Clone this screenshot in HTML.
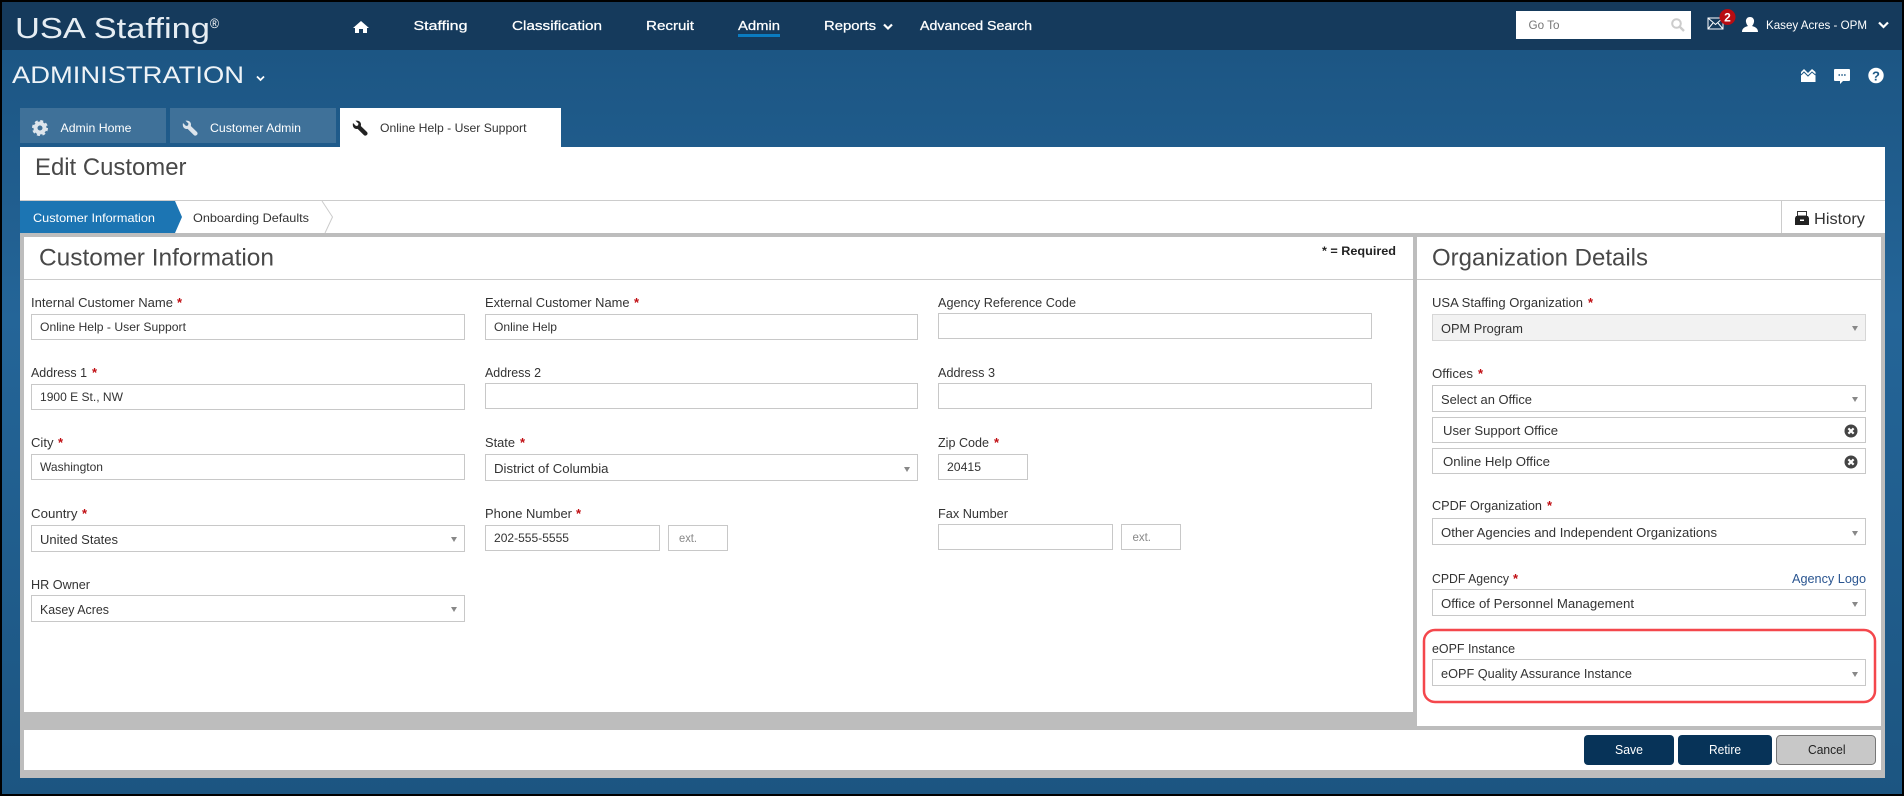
<!DOCTYPE html>
<html lang="en">
<head>
<meta charset="utf-8">
<title>Edit Customer - USA Staffing</title>
<style>
html,body{margin:0;padding:0;background:#000;width:1904px;height:796px;overflow:hidden}
svg{display:block}
text{font-family:"Liberation Sans",sans-serif;font-size:13px;fill:#333;white-space:pre}
.w{fill:#fff}
.nav{fill:#fff;font-size:13px;stroke:#fff;stroke-width:.25}
.tab{fill:#fff;font-size:12px}
.h{font-size:24px;fill:#484848}
.v{font-size:12px;fill:#333}
.s{font-size:13px;fill:#333}
.a{fill:#c00d12;font-weight:bold;font-size:13px}
.ph{font-size:12px;fill:#888}
.b{fill:#fff;stroke:#c8c8c8;stroke-width:1}
.arr{fill:#888}
</style>
</head>
<body>
<svg xmlns="http://www.w3.org/2000/svg" width="1904" height="796" viewBox="0 0 1904 796">
<defs>
<linearGradient id="bg" x1="0" y1="0" x2="0" y2="1">
<stop offset="0" stop-color="#1b5380"/><stop offset=".4" stop-color="#246598"/><stop offset="1" stop-color="#1c5581"/>
</linearGradient>
<path id="wrench" d="M1 3 L4 6 L6 5.5 L6.5 3.5 L3.5 .8 C6 0 9 1.5 9 4.5 C9 5 9 5.5 8.8 6 L15 12 C16 13.2 15.5 14.5 14.8 15 C14 15.8 12.7 16 11.8 15 L5.6 8.9 C2.8 9.7 0 7 1 3 Z"/>
<path id="dn" d="M0 0H6L3 5Z"/>
<g id="x"><circle r="6.5" fill="#444"/><path d="M-2.6-2.6L2.6 2.6M2.6-2.6L-2.6 2.6" stroke="#fff" stroke-width="2.2"/></g>
</defs>

<!-- frame -->
<rect width="1904" height="796" fill="#000"/>
<rect x="2" y="2" width="1900" height="792" fill="url(#bg)"/>
<rect x="2" y="2" width="1900" height="48" fill="#153a5c"/>

<!-- top bar -->
<text x="15" y="38" textLength="195" lengthAdjust="spacingAndGlyphs" style="font-size:29px;fill:#e6edf3">USA Staffing</text>
<text x="210" y="28" textLength="9" lengthAdjust="spacingAndGlyphs" class="w" style="font-size:14px">®</text>
<path d="M361 21L369 28H367V33H363V29H359V33H355V28H353Z" fill="#fff"/>
<text x="413.500" y="30" textLength="54" lengthAdjust="spacingAndGlyphs" class="nav">Staffing</text>
<text x="512" y="30" textLength="90" lengthAdjust="spacingAndGlyphs" class="nav">Classification</text>
<text x="646" y="30" textLength="48" lengthAdjust="spacingAndGlyphs" class="nav">Recruit</text>
<text x="738" y="30" textLength="42" lengthAdjust="spacingAndGlyphs" class="nav">Admin</text>
<rect x="738" y="34" width="42" height="3" fill="#0a7bc0"/>
<text x="824" y="30" textLength="52" lengthAdjust="spacingAndGlyphs" class="nav">Reports</text>
<path d="M884 24.500L888 28.500L892 24.500" fill="none" stroke="#fff" stroke-width="2.200"/>
<text x="920" y="30" textLength="112" lengthAdjust="spacingAndGlyphs" class="nav">Advanced Search</text>

<rect x="1516" y="11" width="175" height="28" fill="#fff"/>
<text x="1528.500" y="29" textLength="31" lengthAdjust="spacingAndGlyphs" style="font-size:12px;fill:#777">Go To</text>
<circle cx="1676.500" cy="23.500" r="4.300" fill="none" stroke="#ccc" stroke-width="2"/>
<path d="M1680 27L1684 31" stroke="#ccc" stroke-width="2.400"/>

<rect x="1708" y="18" width="15" height="11" fill="none" stroke="#fff" stroke-width="1"/>
<path d="M1708 18L1715.500 24.500L1723 18M1708 29L1713 23M1723 29L1718 23" fill="none" stroke="#fff" stroke-width="1"/>
<circle cx="1727.500" cy="17" r="8" fill="#b80d12"/>
<text x="1727.500" y="21.500" text-anchor="middle" class="w" style="font-size:12px;font-weight:bold">2</text>
<path d="M1750 17C1753 17 1754.500 19.500 1754 22C1753.700 24 1752.500 25.500 1752 26C1755 27 1758 28 1758 32H1742C1742 28 1745 27 1748 26C1747.500 25.500 1746.300 24 1746 22C1745.500 19.500 1747 17 1750 17Z" fill="#fff"/>
<text x="1766" y="29" textLength="101" lengthAdjust="spacingAndGlyphs" class="w" style="font-size:12px">Kasey Acres - OPM</text>
<path d="M1879 22.500L1883.500 27L1888 22.500" fill="none" stroke="#fff" stroke-width="2.200"/>

<!-- sub header -->
<text x="12" y="83" textLength="232" lengthAdjust="spacingAndGlyphs" style="font-size:24px;fill:#eef3f7">ADMINISTRATION</text>
<path d="M257 76.500L260.500 80L264 76.500" fill="none" stroke="#fff" stroke-width="1.800"/>
<path d="M1801 82V72L1804 69L1808 73L1812 69L1815.500 72V82Z" fill="#fff"/>
<path d="M1801 75L1804 72L1808 76L1812 72L1815.500 75" fill="none" stroke="#1d5885" stroke-width="1"/>
<path d="M1835 69H1849A1 1 0 0 1 1850 70V80A1 1 0 0 1 1849 81H1843L1840 84V81H1835A1 1 0 0 1 1834 80V70A1 1 0 0 1 1835 69Z" fill="#fff"/>
<path d="M1838.500 75h1.500M1841.300 75h1.500M1844.100 75h1.500" stroke="#1d5885" stroke-width="1.500"/>
<circle cx="1876" cy="75.500" r="7.700" fill="#fff"/>
<text x="1876" y="80.500" text-anchor="middle" style="font-size:13px;font-weight:bold;fill:#1d5885">?</text>

<!-- tabs -->
<rect x="20" y="108" width="146" height="35" fill="#3f7199"/>
<rect x="170" y="108" width="166" height="35" fill="#3f7199"/>
<rect x="340" y="108" width="221" height="39" fill="#fff"/>
<circle cx="40" cy="128" r="4.500" fill="none" stroke="#dde5ec" stroke-width="4"/>
<circle cx="40" cy="128" r="7" fill="none" stroke="#dde5ec" stroke-width="2" stroke-dasharray="3 2.500"/>
<text x="60.500" y="132" textLength="71" lengthAdjust="spacingAndGlyphs" class="tab">Admin Home</text>
<use href="#wrench" x="182" y="120" fill="#dde5ec"/>
<text x="210" y="132" textLength="91" lengthAdjust="spacingAndGlyphs" class="tab">Customer Admin</text>
<use href="#wrench" x="352" y="120" fill="#222"/>
<text x="380" y="132" textLength="146.500" lengthAdjust="spacingAndGlyphs" style="font-size:12px">Online Help - User Support</text>

<!-- page body -->
<rect x="20" y="147" width="1865" height="631" fill="#bdbdbd"/>
<rect x="20" y="147" width="1865" height="86" fill="#fff"/>
<text x="35" y="175" textLength="151.500" lengthAdjust="spacingAndGlyphs" class="h">Edit Customer</text>
<rect x="20" y="200" width="1865" height="1" fill="#ccc"/>

<path d="M20 201H175L182 217L175 233H20Z" fill="#1c75b3"/>
<text x="33" y="222" textLength="122" lengthAdjust="spacingAndGlyphs" class="tab">Customer Information</text>
<text x="193" y="222" textLength="116" lengthAdjust="spacingAndGlyphs" style="font-size:12px">Onboarding Defaults</text>
<path d="M322 201L332.500 217L325 233" fill="none" stroke="#ccc" stroke-width="1"/>

<rect x="1781" y="201" width="1" height="32" fill="#ccc"/>
<path d="M1797.500 211.500H1806.500V216H1797.500Z" fill="#fff" stroke="#333" stroke-width="1"/>
<path d="M1796 216H1808L1809 218V225H1795V218Z" fill="#222"/>
<rect x="1800" y="219.500" width="4" height="1.500" fill="#fff"/>
<text x="1814" y="224" textLength="51" lengthAdjust="spacingAndGlyphs" style="font-size:16px;fill:#333">History</text>

<!-- left pane -->
<rect x="24" y="237" width="1389" height="475" fill="#fff"/>
<rect x="24" y="279" width="1389" height="1" fill="#ccc"/>
<text x="39" y="265.500" textLength="235" lengthAdjust="spacingAndGlyphs" class="h">Customer Information</text>
<text x="1322" y="255" textLength="74" lengthAdjust="spacingAndGlyphs" style="font-size:12px;font-weight:bold;fill:#222">* = Required</text>

<!-- left column -->
<text x="31" y="307" textLength="142" lengthAdjust="spacingAndGlyphs">Internal Customer Name</text>
<text x="177" y="307" class="a">*</text>
<rect class="b" x="31.500" y="314.500" width="433" height="25"/>
<text x="40" y="331" textLength="146" lengthAdjust="spacingAndGlyphs" class="v">Online Help - User Support</text>

<text x="31" y="377" textLength="56" lengthAdjust="spacingAndGlyphs">Address 1</text>
<text x="92" y="377" class="a">*</text>
<rect class="b" x="31.500" y="384.500" width="433" height="25"/>
<text x="40" y="401" textLength="83" lengthAdjust="spacingAndGlyphs" class="v">1900 E St., NW</text>

<text x="31" y="447" textLength="22.500" lengthAdjust="spacingAndGlyphs">City</text>
<text x="58" y="447" class="a">*</text>
<rect class="b" x="31.500" y="454.500" width="433" height="25"/>
<text x="40" y="471" textLength="63" lengthAdjust="spacingAndGlyphs" class="v">Washington</text>

<text x="31" y="518" textLength="46.500" lengthAdjust="spacingAndGlyphs">Country</text>
<text x="82" y="518" class="a">*</text>
<rect class="b" x="31.500" y="525.500" width="433" height="26"/>
<text x="40" y="544" textLength="78" lengthAdjust="spacingAndGlyphs" class="s">United States</text>
<use href="#dn" x="451" y="537" class="arr"/>

<text x="31" y="589" textLength="59" lengthAdjust="spacingAndGlyphs">HR Owner</text>
<rect class="b" x="31.500" y="595.500" width="433" height="26"/>
<text x="40" y="614" textLength="69" lengthAdjust="spacingAndGlyphs" class="s">Kasey Acres</text>
<use href="#dn" x="451" y="607" class="arr"/>

<!-- middle column -->
<text x="485" y="307" textLength="144.500" lengthAdjust="spacingAndGlyphs">External Customer Name</text>
<text x="634" y="307" class="a">*</text>
<rect class="b" x="485.500" y="314.500" width="432" height="25"/>
<text x="494" y="331" textLength="63" lengthAdjust="spacingAndGlyphs" class="v">Online Help</text>

<text x="485" y="377" textLength="56" lengthAdjust="spacingAndGlyphs">Address 2</text>
<rect class="b" x="485.500" y="383.500" width="432" height="25"/>

<text x="485" y="447" textLength="30" lengthAdjust="spacingAndGlyphs">State</text>
<text x="520" y="447" class="a">*</text>
<rect class="b" x="485.500" y="454.500" width="432" height="26"/>
<text x="494" y="473" textLength="114.500" lengthAdjust="spacingAndGlyphs" class="s">District of Columbia</text>
<use href="#dn" x="904" y="467" class="arr"/>

<text x="485" y="518" textLength="87" lengthAdjust="spacingAndGlyphs">Phone Number</text>
<text x="576" y="518" class="a">*</text>
<rect class="b" x="485.500" y="525.500" width="174" height="25"/>
<text x="494" y="542" textLength="75" lengthAdjust="spacingAndGlyphs" class="v">202-555-5555</text>
<rect class="b" x="668.500" y="525.500" width="59" height="25"/>
<text x="679" y="542" textLength="18" lengthAdjust="spacingAndGlyphs" class="ph">ext.</text>

<!-- third column -->
<text x="938" y="307" textLength="138" lengthAdjust="spacingAndGlyphs">Agency Reference Code</text>
<rect class="b" x="938.500" y="313.500" width="433" height="25"/>

<text x="938" y="377" textLength="57" lengthAdjust="spacingAndGlyphs">Address 3</text>
<rect class="b" x="938.500" y="383.500" width="433" height="25"/>

<text x="938" y="447" textLength="51" lengthAdjust="spacingAndGlyphs">Zip Code</text>
<text x="994" y="447" class="a">*</text>
<rect class="b" x="938.500" y="454.500" width="89" height="25"/>
<text x="947" y="471" textLength="34" lengthAdjust="spacingAndGlyphs" class="v">20415</text>

<text x="938" y="518" textLength="70" lengthAdjust="spacingAndGlyphs">Fax Number</text>
<rect class="b" x="938.500" y="524.500" width="174" height="25"/>
<rect class="b" x="1121.500" y="524.500" width="59" height="25"/>
<text x="1132.500" y="541" textLength="18.500" lengthAdjust="spacingAndGlyphs" class="ph">ext.</text>

<!-- right pane -->
<rect x="1417" y="237" width="464" height="489" fill="#fff"/>
<rect x="1417" y="279" width="464" height="1" fill="#ccc"/>
<text x="1432" y="265.500" textLength="216" lengthAdjust="spacingAndGlyphs" class="h">Organization Details</text>

<text x="1432" y="307" textLength="151" lengthAdjust="spacingAndGlyphs">USA Staffing Organization</text>
<text x="1588" y="307" class="a">*</text>
<rect x="1432.500" y="314.500" width="433" height="26" fill="#f2f2f2" stroke="#d6d6d6"/>
<text x="1441" y="333" textLength="82" lengthAdjust="spacingAndGlyphs" class="s">OPM Program</text>
<use href="#dn" x="1852" y="326" class="arr"/>

<text x="1432" y="378" textLength="41" lengthAdjust="spacingAndGlyphs">Offices</text>
<text x="1478" y="378" class="a">*</text>
<rect class="b" x="1432.500" y="385.500" width="433" height="26"/>
<text x="1441" y="404" textLength="91" lengthAdjust="spacingAndGlyphs" class="s">Select an Office</text>
<use href="#dn" x="1852" y="397" class="arr"/>
<rect class="b" x="1432.500" y="417.500" width="433" height="25"/>
<text x="1443" y="435" textLength="115" lengthAdjust="spacingAndGlyphs" class="s">User Support Office</text>
<use href="#x" x="1851" y="431"/>
<rect class="b" x="1432.500" y="448.500" width="433" height="25"/>
<text x="1443" y="466" textLength="107" lengthAdjust="spacingAndGlyphs" class="s">Online Help Office</text>
<use href="#x" x="1851" y="462"/>

<text x="1432" y="510" textLength="110" lengthAdjust="spacingAndGlyphs">CPDF Organization</text>
<text x="1547" y="510" class="a">*</text>
<rect class="b" x="1432.500" y="518.500" width="433" height="26"/>
<text x="1441" y="537" textLength="276" lengthAdjust="spacingAndGlyphs" class="s">Other Agencies and Independent Organizations</text>
<use href="#dn" x="1852" y="531" class="arr"/>

<text x="1432" y="583" textLength="77" lengthAdjust="spacingAndGlyphs">CPDF Agency</text>
<text x="1513" y="583" class="a">*</text>
<text x="1792" y="583" textLength="74" lengthAdjust="spacingAndGlyphs" style="fill:#2a5590">Agency Logo</text>
<rect class="b" x="1432.500" y="589.500" width="433" height="26"/>
<text x="1441" y="608" textLength="193" lengthAdjust="spacingAndGlyphs" class="s">Office of Personnel Management</text>
<use href="#dn" x="1852" y="602" class="arr"/>

<text x="1432" y="653" textLength="83" lengthAdjust="spacingAndGlyphs">eOPF Instance</text>
<rect class="b" x="1432.500" y="659.500" width="433" height="26"/>
<text x="1441" y="678" textLength="191" lengthAdjust="spacingAndGlyphs" class="s">eOPF Quality Assurance Instance</text>
<use href="#dn" x="1852" y="672" class="arr"/>
<rect x="1424" y="630" width="451" height="72" rx="11" ry="11" fill="none" stroke="#f4474c" stroke-width="2.500"/>

<!-- footer -->
<rect x="24" y="730" width="1857" height="40" fill="#fff"/>
<rect x="1584" y="735" width="90" height="30" rx="4" fill="#073358"/>
<text x="1615" y="754" textLength="28" lengthAdjust="spacingAndGlyphs" class="w" style="font-size:13px">Save</text>
<rect x="1678" y="735" width="94" height="30" rx="4" fill="#073358"/>
<text x="1709" y="754" textLength="32" lengthAdjust="spacingAndGlyphs" class="w" style="font-size:13px">Retire</text>
<rect x="1776.500" y="735.500" width="99" height="29" rx="4" fill="#c8c8c8" stroke="#777"/>
<text x="1808" y="754" textLength="37.500" lengthAdjust="spacingAndGlyphs" style="font-size:13px;fill:#222">Cancel</text>
</svg>
</body>
</html>
